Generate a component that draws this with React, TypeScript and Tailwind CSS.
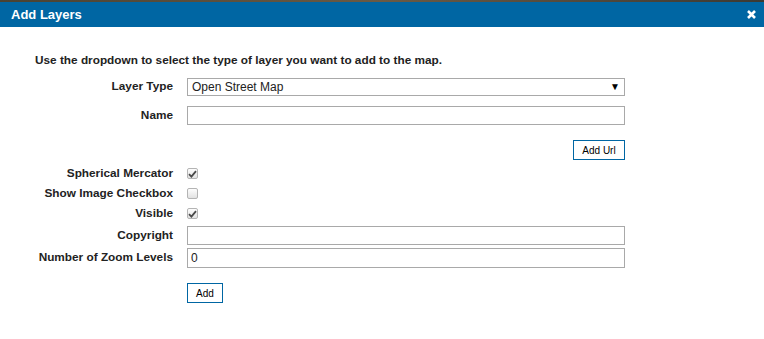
import React from "react";

function Check({ checked }: { checked?: boolean }) {
  return (
    <div className="w-[11px] h-[11px] rounded-[2px] border border-[#b4b4b4] bg-gradient-to-b from-[#fdfdfd] to-[#e2e2e2] flex items-center justify-center">
      {checked && (
        <svg width="9" height="8" viewBox="0 0 9 8">
          <path d="M1 4.2 L3.4 6.6 L8 1.2" stroke="#4a4a4a" strokeWidth="1.8" fill="none" />
        </svg>
      )}
    </div>
  );
}

function Label({ children }: { children: React.ReactNode }) {
  return <div className="w-[138px] text-right font-bold text-[11.8px] text-[#222]">{children}</div>;
}

export default function App() {
  return (
    <div className="w-[764px] h-[339px] bg-white overflow-hidden" style={{ fontFamily: '"Liberation Sans", Arial, sans-serif' }}>
      <div className="h-[2px] bg-gradient-to-r from-[#4a4232] via-[#6b5a44] to-[#3d3a33]" />
      <div className="h-[25px] bg-[#0066a3] flex items-center justify-between pl-[11px] pr-[8px]">
        <span className="text-white font-bold text-[13px]">Add Layers</span>
        <svg width="9" height="9" viewBox="0 0 9 9">
          <path d="M1 1 L8 8 M8 1 L1 8" stroke="white" strokeWidth="2.6" />
        </svg>
      </div>

      <div className="pl-[35px] text-[12px] text-[#222]">
        <div className="mt-[26px] font-bold text-[11.8px] leading-[14px]">Use the dropdown to select the type of layer you want to add to the map.</div>

        <div className="mt-[11px] flex items-center gap-[14px] h-[18px]">
          <Label>Layer Type</Label>
          <div className="w-[438px] h-[18px] border border-[#a9a9a9] flex items-center justify-between pl-[4px] pr-[4px]">
            <span>Open Street Map</span>
            <span className="text-[10px] text-black leading-none">▼</span>
          </div>
        </div>

        <div className="mt-[10px] flex items-center gap-[14px] h-[19px]">
          <Label>Name</Label>
          <div className="w-[438px] h-[19px] border border-[#a9a9a9]" />
        </div>

        <div className="mt-[15px] flex h-[20px] w-[590px] justify-end">
          <button className="w-[52px] h-[20px] border border-[#0066a3] bg-white text-[10px] text-black">Add Url</button>
        </div>

        <div className="mt-[6px] flex items-center gap-[14px] h-[15px]">
          <Label>Spherical Mercator</Label>
          <Check checked />
        </div>
        <div className="mt-[5px] flex items-center gap-[14px] h-[15px]">
          <Label>Show Image Checkbox</Label>
          <Check />
        </div>
        <div className="mt-[5px] flex items-center gap-[14px] h-[15px]">
          <Label>Visible</Label>
          <Check checked />
        </div>

        <div className="mt-[5px] flex items-center gap-[14px] h-[19px]">
          <Label>Copyright</Label>
          <div className="w-[438px] h-[19px] border border-[#a9a9a9]" />
        </div>
        <div className="mt-[3px] flex items-center gap-[14px] h-[20px]">
          <Label>Number of Zoom Levels</Label>
          <div className="w-[438px] h-[20px] border border-[#a9a9a9] flex items-center pl-[3px]">0</div>
        </div>

        <div className="mt-[15px] pl-[152px]">
          <button className="w-[36px] h-[20px] border border-[#0066a3] bg-white text-[10px] text-black">Add</button>
        </div>
      </div>
    </div>
  );
}
